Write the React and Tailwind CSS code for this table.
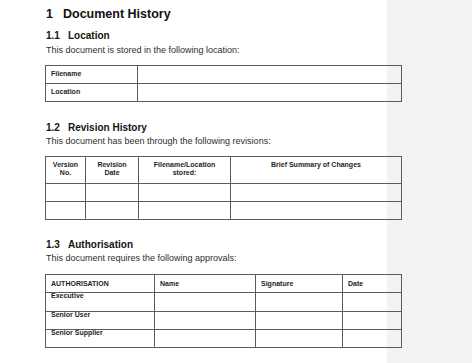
const font = { fontFamily: '"Liberation Sans", Arial, sans-serif' };

function H2({ num, children, className = "" }) {
  return (
    <h2
      className={`ml-px flex text-[10px] leading-[14px] font-bold text-[#141414] ${className}`}
    >
      <span className="w-[22px]">{num}</span>
      <span>{children}</span>
    </h2>
  );
}

function Body({ children, className = "" }) {
  return (
    <p className={`ml-px text-[9px] leading-[12px] text-[#2e2e2e] ${className}`}>
      {children}
    </p>
  );
}

function LocationTable() {
  const rows = [
    { label: "Filename", h: "h-[17px]" },
    { label: "Location", h: "h-[18px] border-t" },
  ];
  return (
    <div className="mt-[9px] w-[357px] border border-[#5c5c5c]">
      {rows.map((row) => (
        <div key={row.label} className={`flex ${row.h} border-[#5c5c5c]`}>
          <div className="w-[91px] pl-[5px] text-[7px] leading-[16px] font-bold text-[#1e1e1e]">
            {row.label}
          </div>
          <div className="flex-1 border-l border-[#5c5c5c]" />
        </div>
      ))}
    </div>
  );
}

function RevisionTable() {
  const cols = [
    { w: "w-[39px]", label: ["Version", "No."] },
    { w: "w-[53px] border-l", label: ["Revision", "Date"] },
    { w: "w-[92px] border-l", label: ["Filename/Location", "stored:"] },
    { w: "flex-1 border-l", label: ["Brief Summary of Changes"] },
  ];
  return (
    <div className="mt-[9px] w-[357px] border border-[#5c5c5c]">
      <div className="flex h-[26px]">
        {cols.map((c, i) => (
          <div
            key={i}
            className={`${c.w} border-[#5c5c5c] pt-[4px] text-center text-[7px] leading-[8px] font-bold text-[#1e1e1e]`}
          >
            {c.label.map((l) => (
              <div key={l}>{l}</div>
            ))}
          </div>
        ))}
      </div>
      {[0, 1].map((r) => (
        <div key={r} className="flex h-[18px] border-t border-[#5c5c5c]">
          {cols.map((c, i) => (
            <div key={i} className={`${c.w} border-[#5c5c5c]`} />
          ))}
        </div>
      ))}
    </div>
  );
}

function AuthTable() {
  const cols = [
    "w-[108px]",
    "w-[101px] border-l",
    "w-[87px] border-l",
    "flex-1 border-l",
  ];
  const header = ["AUTHORISATION", "Name", "Signature", "Date"];
  const rows = [
    { label: "Executive", h: "h-[19px]" },
    { label: "Senior User", h: "h-[18px]" },
    { label: "Senior Supplier", h: "h-[18px]" },
  ];
  return (
    <div className="mt-[9.5px] w-[357px] border border-[#5c5c5c]">
      <div className="flex h-[17px]">
        {header.map((h, i) => (
          <div
            key={h}
            className={`${cols[i]} border-[#5c5c5c] pl-[5px] text-[7px] leading-[17px] font-bold text-[#1e1e1e]`}
          >
            {h}
          </div>
        ))}
      </div>
      {rows.map((row) => (
        <div key={row.label} className={`flex ${row.h} border-t border-[#5c5c5c]`}>
          <div className={`${cols[0]} pl-[5px] text-[7px] leading-[6px] font-bold text-[#1e1e1e]`}>
            {row.label}
          </div>
          {cols.slice(1).map((c, i) => (
            <div key={i} className={`${c} border-[#5c5c5c]`} />
          ))}
        </div>
      ))}
    </div>
  );
}

export default function App() {
  return (
    <div
      style={font}
      className="h-[363px] w-[474px] overflow-hidden bg-[linear-gradient(to_right,#ffffff_387px,#f3f3f3_387px,#f3f3f3_472px,#ffffff_472px)] pt-[4px] pl-[45px]"
    >
      <h1 className="ml-px flex text-[12.5px] leading-[20px] font-bold text-[#111]">
        <span className="w-[17px]">1</span>
        <span>Document History</span>
      </h1>

      <H2 num="1.1" className="mt-[4.5px]">Location</H2>
      <Body className="mt-[1.5px]">This document is stored in the following location:</Body>
      <LocationTable />

      <H2 num="1.2" className="mt-[19px]">Revision History</H2>
      <Body>This document has been through the following revisions:</Body>
      <RevisionTable />

      <H2 num="1.3" className="mt-[18px]">Authorisation</H2>
      <Body>This document requires the following approvals:</Body>
      <AuthTable />
    </div>
  );
}
